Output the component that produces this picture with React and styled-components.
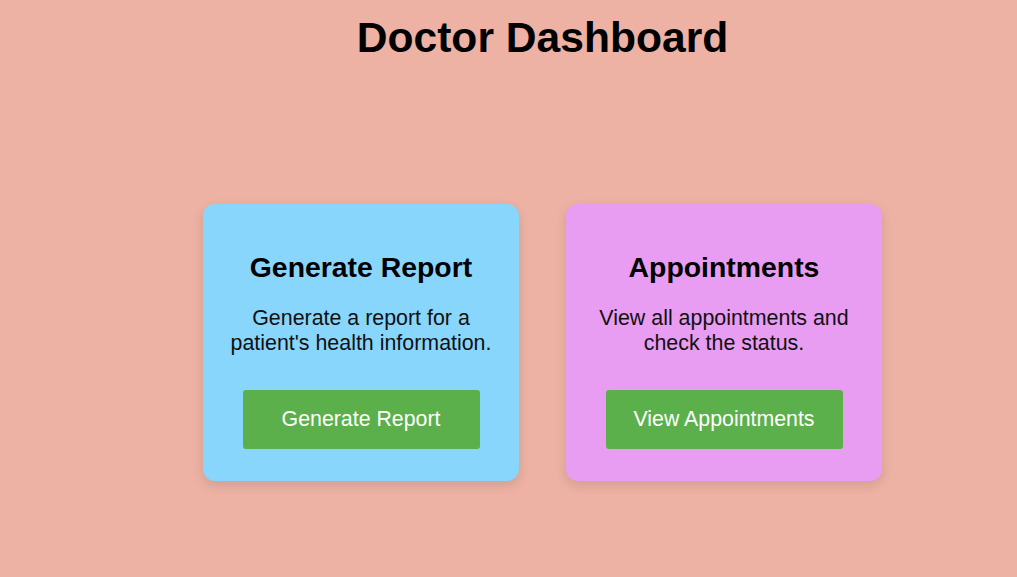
import React from "react";
import styled, { createGlobalStyle } from "styled-components";

const GlobalStyle = createGlobalStyle`
  html, body {
    margin: 0;
    padding: 0;
    background: #edb2a3;
    font-family: "Liberation Sans", Arial, sans-serif;
  }
`;

const Page = styled.div`
  min-height: 577px;
  padding-left: 68px;
  box-sizing: border-box;
  display: flex;
  flex-direction: column;
  align-items: center;
`;

const Title = styled.h1`
  margin: 13px 0 0;
  font-size: 42.6px;
  font-weight: bold;
  color: #000;
`;

const CardRow = styled.div`
  display: flex;
  gap: 47px;
  margin-top: 142px;
`;

const Card = styled.div`
  width: 316px;
  height: 277px;
  box-sizing: border-box;
  padding: 32px 20px;
  border-radius: 12px;
  background: ${(p) => p.$bg};
  box-shadow: 0 4px 12px rgba(0, 0, 0, 0.12);
  display: flex;
  flex-direction: column;
  align-items: center;
  text-align: center;
`;

const CardTitle = styled.h2`
  margin: 15px 0 22px;
  font-size: 28.4px;
  font-weight: bold;
  color: #000;
`;

const CardText = styled.p`
  margin: 0 0 34px;
  font-size: 21.4px;
  color: #111;
`;

const ActionButton = styled.button`
  width: 237px;
  height: 59px;
  border: none;
  border-radius: 3px;
  background: #5bb04b;
  color: #fff;
  font-family: "Liberation Sans", Arial, sans-serif;
  font-size: 21.33px;
  cursor: pointer;
  flex-shrink: 0;
`;

const cards = [
  {
    title: "Generate Report",
    text: ["Generate a report for a", "patient's health information."],
    button: "Generate Report",
    bg: "#89d6fd",
  },
  {
    title: "Appointments",
    text: ["View all appointments and", "check the status."],
    button: "View Appointments",
    bg: "#e89cf2",
  },
];

export default function App() {
  return (
    <>
      <GlobalStyle />
      <Page>
        <Title>Doctor Dashboard</Title>
        <CardRow>
          {cards.map((c) => (
            <Card key={c.title} $bg={c.bg}>
              <CardTitle>{c.title}</CardTitle>
              <CardText>
                {c.text[0]}
                <br />
                {c.text[1]}
              </CardText>
              <ActionButton>{c.button}</ActionButton>
            </Card>
          ))}
        </CardRow>
      </Page>
    </>
  );
}
